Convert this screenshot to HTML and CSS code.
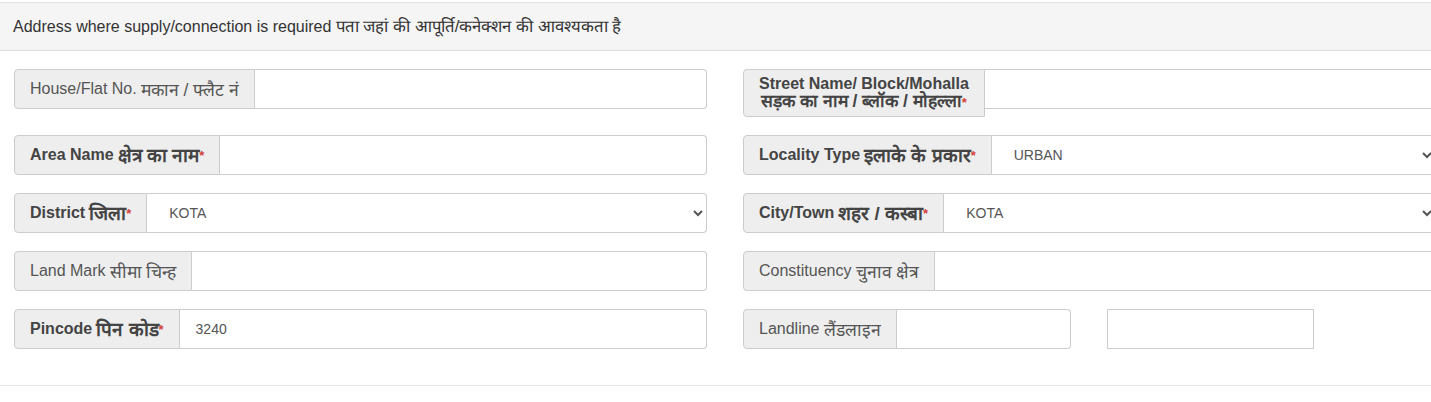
FILE: index.html
```html
<!DOCTYPE html>
<html lang="en">
  <head>
    <meta charset="UTF-8" />
    <meta name="viewport" content="width=device-width, initial-scale=1.0" />
    <title>Connection Address</title>
    <link rel="stylesheet" href="styles.css">
  </head>
  <body>
    <!-- Address Panel -->
    <div class="panel">
      <div class="panel-heading">Address where supply/connection is required <span class="hi">पता जहां की आपूर्ति/कनेक्शन की आवश्यकता है</span></div>

      <div class="panel-body">
        <div class="form-grid">
          <div class="input-group">
            <span class="addon">House/Flat No. <span class="hi">मकान / फ्लैट नं</span></span>
            <input type="text" class="field" />
          </div>
          <div class="input-group">
            <span class="addon addon-bold addon-two-line">
              <span class="line">Street Name/ Block/Mohalla</span>
              <span class="line hi">सड़क का नाम / ब्लॉक / मोहल्ला<span class="req">*</span></span>
            </span>
            <input type="text" class="field" />
          </div>

          <div class="input-group">
            <span class="addon addon-bold">Area Name <span class="hi">क्षेत्र का नाम</span><span class="req">*</span></span>
            <input type="text" class="field" />
          </div>
          <div class="input-group">
            <span class="addon addon-bold">Locality Type <span class="hi">इलाके के प्रकार</span><span class="req">*</span></span>
            <select class="field">
              <option>URBAN</option>
              <option>RURAL</option>
            </select>
          </div>

          <div class="input-group">
            <span class="addon addon-bold">District <span class="hi">जिला</span><span class="req">*</span></span>
            <select class="field">
              <option>KOTA</option>
            </select>
          </div>
          <div class="input-group">
            <span class="addon addon-bold">City/Town <span class="hi">शहर / कस्बा</span><span class="req">*</span></span>
            <select class="field">
              <option>KOTA</option>
            </select>
          </div>

          <div class="input-group">
            <span class="addon">Land Mark <span class="hi">सीमा चिन्ह</span></span>
            <input type="text" class="field" />
          </div>
          <div class="input-group">
            <span class="addon">Constituency <span class="hi">चुनाव क्षेत्र</span></span>
            <input type="text" class="field" />
          </div>

          <div class="input-group">
            <span class="addon addon-bold">Pincode <span class="hi">पिन कोड</span><span class="req">*</span></span>
            <input type="text" class="field" value="3240" />
          </div>
          <div class="phone-row">
            <div class="input-group landline">
              <span class="addon">Landline <span class="hi">लैंडलाइन</span></span>
              <input type="text" class="field" />
            </div>
            <input type="text" class="field field-plain" />
          </div>
        </div>
      </div>

      <hr class="divider">
    </div>
  </body>
</html>
```

FILE: styles.css
```css
* {
  margin: 0;
  padding: 0;
  box-sizing: border-box;
}

html,
body {
  font-family: "Liberation Sans", Arial, sans-serif;
  background: #fff;
  color: #333;
  overflow: hidden;
}

.panel {
  margin-top: 2px;
  width: 1460px;
}

.panel-heading {
  background: #f5f5f5;
  border-top: 1px solid #e3e3e3;
  border-bottom: 1px solid #dddddd;
  padding: 14px 13px;
  font-size: 16px;
  line-height: 19px;
  color: #333;
}

.panel-heading .hi {
  font-size: 16.7px;
}

.panel-body {
  padding: 18px 0 36px 14px;
}

.form-grid {
  display: grid;
  grid-template-columns: 693px 693px;
  column-gap: 36px;
  row-gap: 18px;
  align-items: start;
}

.input-group {
  display: flex;
  align-items: flex-start;
}

.addon {
  display: flex;
  align-items: center;
  gap: 4px;
  height: 40px;
  padding: 0 15px;
  background: #eeeeee;
  border: 1px solid #cccccc;
  border-radius: 4px 0 0 4px;
  font-size: 16px;
  color: #555;
  white-space: nowrap;
}

.addon .hi {
  font-size: 17.5px;
}

.addon-bold {
  font-weight: bold;
  color: #444;
}

.addon-bold .hi {
  font-size: 19px;
}

.addon .req {
  margin-left: -4px;
}

.addon-two-line {
  flex-direction: column;
  justify-content: center;
  gap: 0;
  height: 48px;
  padding: 5px 15px;
  text-align: center;
}

.addon-two-line .line {
  display: block;
  height: 18px;
  line-height: 18px;
}

.addon-two-line .hi {
  font-size: 17.5px;
  line-height: 17px;
}

.addon-two-line .req {
  margin-left: 0;
}

.req {
  color: #d43f3a;
  font-size: 13px;
}

.field {
  flex: 1;
  min-width: 0;
  height: 40px;
  padding: 0 16px;
  border: 1px solid #cccccc;
  border-left: none;
  border-radius: 0 4px 4px 0;
  background: #fff;
  font-family: "Liberation Sans", Arial, sans-serif;
  font-size: 14px;
  color: #555;
  outline: none;
}

select.field {
  padding: 0 8px 0 18px;
}

.phone-row {
  display: flex;
  gap: 36px;
}

.landline {
  width: 328px;
}

.field-plain {
  flex: none;
  width: 207px;
  border-left: 1px solid #cccccc;
  border-radius: 0;
}

.divider {
  border: none;
  border-top: 1px solid #e5e5e5;
}
```
